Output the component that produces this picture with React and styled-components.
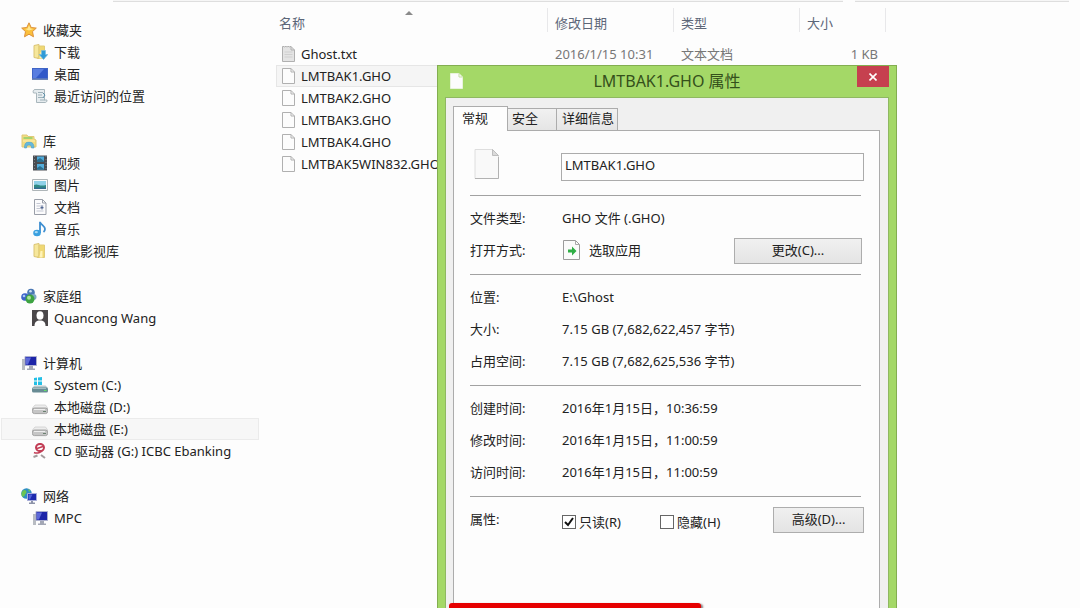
import { useState } from 'react';
import styled, { createGlobalStyle } from 'styled-components';

const GlobalStyle = createGlobalStyle`
    * {
        box-sizing: border-box;
    }

    body {
        margin: 0;
        background: #fdfdfd;
        color: #222;
        font-family: "Noto Sans", "Noto Sans CJK SC", sans-serif;
        font-size: 13px;
        line-height: 22px;
        overflow: hidden;
    }

    button, input {
        font: inherit;
        color: inherit;
    }
`;

// --- Explorer ---

const Desktop = styled.div`
    position: relative;
    min-height: 100vh;
    overflow: hidden;
`;

const AddressStrip = styled.div`
    display: flex;
    gap: 12px;
    height: 3px;
    padding: 0 11px 0 113px;
`;

const StripField = styled.div`
    flex: ${props => props.$grow};
    height: 2px;
    background: #f6f6f6;
    border-bottom: 1px solid #dedede;
`;

const Explorer = styled.div`
    display: flex;
`;

const Sidebar = styled.nav`
    width: 276px;
    flex-shrink: 0;
    display: flex;
    flex-direction: column;
    gap: 23px;
    padding: 16px 17px 0 1px;
`;

const Group = styled.div`
    display: flex;
    flex-direction: column;
`;

const NavLink = styled.a`
    display: flex;
    align-items: center;
    gap: 6px;
    height: 22px;
    padding-left: ${props => (props.$child ? '30px' : '19px')};
    border: 1px solid ${props => (props.$selected ? '#ebebeb' : 'transparent')};
    background: ${props => (props.$selected ? '#f7f7f7' : 'none')};
    color: #222;
    text-decoration: none;
    white-space: nowrap;

    svg {
        flex-shrink: 0;
    }
`;

const FileArea = styled.main`
    flex: 1;
    min-width: 0;
`;

const FileTable = styled.table`
    width: 610px;
    table-layout: fixed;
    border-collapse: collapse;
`;

const HeadCell = styled.th`
    position: relative;
    width: ${props => props.$width}px;
    height: 40px;
    padding: 0 0 0 ${props => props.$indent || 7}px;
    background: linear-gradient(#e8e8ea, #e8e8ea) right 5px / 1px 24px no-repeat;
    color: #5c6678;
    font-weight: normal;
    text-align: left;
`;

const SortArrow = styled.svg`
    position: absolute;
    top: 7px;
    left: 50%;
    margin-left: -7px;
`;

const FileRow = styled.tr`
    height: 22px;
    background: ${props => (props.$selected ? '#f5f5f5' : 'none')};
    box-shadow: ${props => (props.$selected ? 'inset 0 0 0 1px #e6e6e6' : 'none')};
`;

const FileCell = styled.td`
    padding: 0 8px 0 ${props => (props.$main ? 5 : 7)}px;
    color: ${props => (props.$main ? '#222' : '#777')};
    text-align: ${props => (props.$right ? 'right' : 'left')};
    white-space: nowrap;
`;

const FileName = styled.span`
    display: flex;
    align-items: center;
    gap: 4px;
    height: 22px;
`;

// --- Properties dialog ---

const Dialog = styled.section`
    position: absolute;
    top: 65px;
    bottom: -1px;
    left: 437px;
    width: 460px;
    display: flex;
    flex-direction: column;
    padding: 0 7px;
    border: 1px solid #83ae50;
    background: #a4d867;
`;

const TitleBar = styled.header`
    display: grid;
    grid-template-columns: 32px 1fr 32px;
    align-items: center;
    height: 31px;
    padding-bottom: 2px;
    flex-shrink: 0;

    svg {
        margin-left: 4px;
    }
`;

const Title = styled.h1`
    margin: 0;
    color: #35501b;
    font-size: 16px;
    font-weight: normal;
    line-height: 28px;
    text-align: center;
`;

const CloseButton = styled.button`
    align-self: start;
    display: flex;
    align-items: center;
    justify-content: center;
    width: 32px;
    height: 21px;
    padding: 0;
    border: 0;
    background: #c6404f;

    svg {
        margin: 0;
    }
`;

const Client = styled.div`
    flex: 1;
    display: flex;
    flex-direction: column;
    padding: 8px 8px 0 7px;
    border: 1px solid #8fb862;
    border-bottom: 0;
    background: #f0f0f0;
`;

const TabList = styled.div`
    display: flex;
    align-items: flex-end;
    height: 24px;
`;

const Tab = styled.button`
    height: ${props => (props.$active ? 25 : 22)}px;
    margin-bottom: ${props => (props.$active ? -1 : 0)}px;
    padding: 0 ${props => props.$tail}px 2px ${props => props.$lead}px;
    border: 1px solid #acacac;
    border-left-width: ${props => (props.$active ? 1 : 0)}px;
    border-bottom: 0;
    background: ${props => (props.$active ? '#fdfdfd' : 'linear-gradient(#f1f1f1, #e5e5e5)')};
    line-height: 19px;
    white-space: nowrap;
    z-index: ${props => (props.$active ? 1 : 0)};
`;

const Panel = styled.div`
    flex: 1;
    padding: 0 15px 0 16px;
    border: 1px solid #acacac;
    border-bottom: 0;
    background: #fdfdfd;
`;

const Section = styled.div`
    padding: 5px 0 9px;
    background: linear-gradient(#a2a2a2, #a2a2a2) left bottom / calc(100% - 3px) 1px no-repeat;
    margin-bottom: 1px;

    &:last-child {
        background: none;
    }
`;

const NameRow = styled.div`
    display: flex;
    align-items: center;
    height: 51px;
    padding: 5px 0 0 4px;
    gap: 61px;
`;

const NameInput = styled.input`
    flex: 1;
    min-width: 0;
    height: 28px;
    margin-top: 6px;
    padding: 0 3px 4px;
    border: 1px solid #ababab;
    background: #fdfdfd;
`;

const Field = styled.div`
    display: flex;
    align-items: center;
    height: 32px;
`;

const FieldLabel = styled.span`
    width: 92px;
    flex-shrink: 0;
`;

const FieldValue = styled.div`
    flex: 1;
    display: flex;
    align-items: center;
    gap: 8px;
    white-space: nowrap;
`;

const DialogButton = styled.button`
    width: ${props => props.$width}px;
    height: 26px;
    margin-top: 2px;
    margin-right: ${props => (props.$inset ? 2 : 0)}px;
    padding: 0 0 2px;
    border: 1px solid #adadad;
    background: linear-gradient(#f0f0f0, #e4e4e4);
    line-height: 20px;
`;

const CheckLabel = styled.label`
    display: flex;
    align-items: center;
    gap: 3px;
    width: 90px;
    padding-top: 6px;
`;

const CheckInput = styled.input`
    appearance: none;
    width: 14px;
    height: 14px;
    margin: 0;
    border: 1px solid #666;
    background: #fff;

    &:checked {
        background: #fff url("data:image/svg+xml,%3Csvg xmlns='http://www.w3.org/2000/svg' viewBox='0 0 12 12'%3E%3Cpath d='M2 6l3 3 5-7' fill='none' stroke='%23111' stroke-width='2'/%3E%3C/svg%3E") center / 12px 12px;
    }
`;

const RecordBar = styled.div`
    position: absolute;
    bottom: 0;
    left: 449px;
    width: 252px;
    height: 5px;
    border-radius: 3px 3px 0 0;
    background: #e60000;
    box-shadow: 2px 1px 2px rgba(60, 40, 40, 0.6);
`;

// --- Icons ---

const Svg = ({ children }) => (
    <svg width="16" height="16" viewBox="0 0 16 16" fill="none" aria-hidden="true">{children}</svg>
);

const StarIcon = () => (
    <Svg>
        <path d="M8 .8l2.2 4.7 5.1.6-3.8 3.5 1 5.2L8 12.2l-4.5 2.6 1-5.2L.7 6.1l5.1-.6z" fill="#fbc03c" stroke="#dc913b" strokeLinejoin="round" />
        <path d="M8 3.2l1.4 3.2 3.2.5L8 8.5 4 7l2.7-.6z" fill="#ffe892" />
    </Svg>
);

const FolderIcon = ({ download }) => (
    <Svg>
        <path d="M2 1.5l5-1v14l-5-1z" fill="#f6e79b" stroke="#dac475" />
        <path d="M7 2h5.5v12.5H5.5L7 12z" fill="#f0d873" stroke="#e0cb78" />
        <path d="M8.5 8h2v6.5h-3z" fill="#fff3b8" />
        {download && <path d="M9.5 6.5h4v4h2.3l-4.3 5-4.3-5h2.3z" fill="#2f9bd8" stroke="#77bce0" strokeWidth=".7" />}
    </Svg>
);

const DesktopIcon = () => (
    <Svg>
        <path d="M0 2h16v12H0z" fill="#4065c6" />
        <path d="M1 3h14v9H1z" fill="#3159c9" />
        <path d="M1 3h11L4 12H1z" fill="#587de0" />
        <path d="M0 12.5h16V14H0z" fill="#6d86b6" />
    </Svg>
);

const RecentIcon = () => (
    <Svg>
        <path d="M3 1.5h9.5V12H15c0 2-1 2.5-2 2.5H4.500V5H1.500C.5 3.500 1.500 1.500 3 1.500z" fill="#e6ecef" stroke="#a8b6bc" />
        <path d="M6 4.500h5M6 7h4M6 9.500h5M8 12h5" stroke="#9fb2ba" />
        <path d="M11 5l2 2-2 3" stroke="#5c8fa8" />
    </Svg>
);

const LibraryIcon = () => (
    <Svg>
        <path d="M1 2h5l1 1.500h6V6l2 1v7H1z" fill="#f2dc81" stroke="#e0c978" />
        <path d="M2.500 4h9v2h-9z" fill="#a5d36e" />
        <path d="M3.500 15c0-4 1-6 4.500-6s5 2 5 6h-2.500c0-2-.5-3-2.500-3s-2.500 1-2.500 3z" fill="#65b8dd" stroke="#4a9ec6" strokeWidth=".6" />
        <path d="M2 8h12" stroke="#fff0b0" />
    </Svg>
);

const VideoIcon = () => (
    <Svg>
        <path d="M1 .5h14v15H1z" fill="#4a4d52" />
        <path d="M5 1.500h7V7H5z" fill="#4da9d9" />
        <path d="M5 9h7v5.500H5z" fill="#55aedb" />
        <path d="M5 5l3-2 4 3v1H5zM5 13l3-2 4 3v.5H5z" fill="#2c708f" />
        <path d="M2.500 1v14M14 1v14" stroke="#7c848a" strokeDasharray="1 2" />
    </Svg>
);

const PictureIcon = () => (
    <Svg>
        <path d="M.5 2.500h15v11H.5z" fill="#fafafa" stroke="#aeb5b8" />
        <path d="M2 4h12v8H2z" fill="#8fd1e8" />
        <path d="M2 8c4-2 5 2 12 0v4H2z" fill="#2f8a84" />
        <path d="M2 10.500h12V12H2z" fill="#326c91" />
    </Svg>
);

const DocumentIcon = () => (
    <Svg>
        <path d="M2.500.5h8L14 4v11.500H2.500z" fill="#fbfbfc" stroke="#9a9fa9" />
        <path d="M10.500.5V4H14" stroke="#9a9fa9" />
        <path d="M4.500 4.500h4M4.500 7h7M4.500 9.500h7M4.500 12h7" stroke="#c3c7d3" />
        <path d="M10 6.500v4M8.500 8.500h3" stroke="#4f6590" />
    </Svg>
);

const MusicIcon = () => (
    <Svg>
        <path d="M8 12V.8c.5 3 5 4 5 7.200 0 1.500-.8 2.500-1.500 3" stroke="#3d8ed0" strokeWidth="1.800" />
        <ellipse cx="5" cy="12" rx="3.800" ry="3.200" fill="#3aa0e0" />
        <ellipse cx="4.300" cy="11.200" rx="1.600" ry="1.100" fill="#a6daf6" />
    </Svg>
);

const HomegroupIcon = () => (
    <Svg>
        <circle cx="4" cy="9" r="3.800" fill="#3c62c9" />
        <circle cx="10" cy="4.500" r="3.800" fill="#4a78b4" />
        <circle cx="12.500" cy="9" r="3" fill="#7fa8c4" />
        <circle cx="9" cy="11" r="4.500" fill="#3da341" />
        <circle cx="8" cy="9.800" r="2" fill="#a9e39b" />
        <circle cx="3" cy="8" r="1.300" fill="#a7c8f2" />
        <circle cx="9.500" cy="3.300" r="1.300" fill="#cbe0f3" />
    </Svg>
);

const UserIcon = () => (
    <Svg>
        <path d="M0 0h16v16H0z" fill="#4a4749" />
        <ellipse cx="8" cy="5.500" rx="3.500" ry="4.300" fill="#fff" />
        <path d="M2.500 16c0-4 2-5.500 5.500-5.500s5.500 1.500 5.500 5.500z" fill="#fff" />
    </Svg>
);

const ComputerIcon = () => (
    <Svg>
        <path d="M1 4h3v11H1z" fill="#b8bcc2" />
        <path d="M4 1.500h11.500v9H4z" fill="#1c24a8" stroke="#adb1cf" />
        <path d="M5 2.500h5L7 9.500H5z" fill="#5d69d9" />
        <path d="M8 11h4v2.500h2V15H6v-1.500h2z" fill="#a3a7b5" />
    </Svg>
);

const SystemDriveIcon = () => (
    <Svg>
        <path d="M2 1l3-.5v3H2zM6 .5L10 0v3.500H6zM2 4.500h3V8H2zM6 4.500h4V8H6z" fill="#22bfe6" />
        <path d="M2.500 8.500h11L16 11H0z" fill="#b9c7cb" />
        <rect y="10.500" width="16" height="5" rx="1.500" fill="#688b94" />
        <path d="M1 11.500h13" stroke="#a4bbc1" />
        <path d="M12 13.500h2.500" stroke="#5fe264" />
    </Svg>
);

const DriveIcon = () => (
    <Svg>
        <path d="M3 6h10.500L16 9.500H0z" fill="#ededed" stroke="#c4c4c4" strokeWidth=".6" />
        <rect x=".4" y="9" width="15.200" height="5.600" rx="2" fill="#c5c5c5" stroke="#969696" strokeWidth=".8" />
        <path d="M2 10.500h11" stroke="#eee" />
        <path d="M11 12.500h3" stroke="#6b8170" />
    </Svg>
);

const DiscIcon = () => (
    <Svg>
        <ellipse cx="8" cy="4.500" rx="4" ry="3.600" stroke="#c23d55" strokeWidth="2" />
        <path d="M5 5.500l6-2M2 9.500c3 1.500 7 0 9-2.500" stroke="#c23d55" strokeWidth="1.500" />
        <path d="M1.500 14l4-1.500M9 12l4 3" stroke="#a49a9c" strokeWidth="2" />
    </Svg>
);

const NetworkIcon = () => (
    <Svg>
        <circle cx="5.500" cy="5.500" r="5.300" fill="#2f8ec4" />
        <path d="M1.500 3c2-2 4-1 4 1s-2 2-2 4l-2 1C0 7 0 5 1.500 3zM7 1l2.500 1.500L8 4z" fill="#6cc552" />
        <path d="M6.500 5.500h9v7h-9z" fill="#1d2aae" stroke="#a6acd8" />
        <path d="M7.500 6.500h4l-2.500 5H7.500z" fill="#5262d8" />
        <path d="M10 13h2v1.500h2V16H8v-1.500h2z" fill="#8d93a8" />
    </Svg>
);

const PageIcon = ({ lined, white }) => (
    <Svg>
        <path d="M1.500.5h8.500l3.500 3.500v11.500h-12z" fill={lined ? '#e4e4e4' : '#fcfcfc'} stroke={white ? '#e8f3dc' : '#b0b0b0'} />
        <path d="M10 .5V4h3.500" stroke={white ? '#c3dda3' : '#b0b0b0'} />
        {lined && <path d="M3.500 0v2M6 0v2M8.500 0v2M3.500 6h8M3.500 8.500h8M3.500 11h8" stroke="#d0d0d0" />}
    </Svg>
);

const LargePageIcon = () => (
    <svg width="26" height="32" viewBox="0 0 26 32" fill="none" aria-hidden="true">
        <path d="M1 1.500h17.500l6 6v23H1z" fill="#f9f9f9" stroke="#dedede" />
        <path d="M18.500 1.500v6h6z" fill="#dadada" stroke="#bdbdbd" />
        <path d="M1 30.500h23.500V9" stroke="#b2b2b2" />
    </svg>
);

const PickAppIcon = () => (
    <svg width="19" height="20" viewBox="0 0 19 20" fill="none" aria-hidden="true">
        <path d="M1.500.5h12l4 4v15h-16z" fill="#fbfbfb" stroke="#9b9b9b" />
        <path d="M13.500.5v4h4" stroke="#aaa" />
        <path d="M6 9.500h4V6.500l4.500 4.500L10 15.500v-3H6z" fill="#2fae45" />
    </svg>
);

// --- Data ---

const groups = [
    {
        label: '收藏夹',
        Icon: StarIcon,
        items: [
            { label: '下载', Icon: () => <FolderIcon download /> },
            { label: '桌面', Icon: DesktopIcon },
            { label: '最近访问的位置', Icon: RecentIcon },
        ],
    },
    {
        label: '库',
        Icon: LibraryIcon,
        items: [
            { label: '视频', Icon: VideoIcon },
            { label: '图片', Icon: PictureIcon },
            { label: '文档', Icon: DocumentIcon },
            { label: '音乐', Icon: MusicIcon },
            { label: '优酷影视库', Icon: FolderIcon },
        ],
    },
    {
        label: '家庭组',
        Icon: HomegroupIcon,
        items: [{ label: 'Quancong Wang', Icon: UserIcon }],
    },
    {
        label: '计算机',
        Icon: ComputerIcon,
        items: [
            { label: 'System (C:)', Icon: SystemDriveIcon },
            { label: '本地磁盘 (D:)', Icon: DriveIcon },
            { label: '本地磁盘 (E:)', Icon: DriveIcon, selected: true },
            { label: 'CD 驱动器 (G:) ICBC Ebanking', Icon: DiscIcon },
        ],
    },
    {
        label: '网络',
        Icon: NetworkIcon,
        items: [{ label: 'MPC', Icon: ComputerIcon }],
    },
];

const files = [
    { name: 'Ghost.txt', date: '2016/1/15 10:31', type: '文本文档', size: '1 KB', lined: true },
    { name: 'LMTBAK1.GHO', selected: true },
    { name: 'LMTBAK2.GHO' },
    { name: 'LMTBAK3.GHO' },
    { name: 'LMTBAK4.GHO' },
    { name: 'LMTBAK5WIN832.GHO' },
];

const sizes = [
    ['位置:', 'E:\\Ghost'],
    ['大小:', '7.15 GB (7,682,622,457 字节)'],
    ['占用空间:', '7.15 GB (7,682,625,536 字节)'],
];

const times = [
    ['创建时间:', '2016年1月15日，10:36:59'],
    ['修改时间:', '2016年1月15日，11:00:59'],
    ['访问时间:', '2016年1月15日，11:00:59'],
];

const FieldList = ({ rows }) => (
    <Section>
        {rows.map(([label, value]) => (
            <Field key={label}>
                <FieldLabel>{label}</FieldLabel>
                <FieldValue>{value}</FieldValue>
            </Field>
        ))}
    </Section>
);

const PropertiesDialog = () => {
    const [name, setName] = useState('LMTBAK1.GHO');
    const [readOnly, setReadOnly] = useState(true);
    const [hidden, setHidden] = useState(false);

    return (
        <Dialog role="dialog" aria-labelledby="dialog-title">
            <TitleBar>
                <PageIcon white />
                <Title id="dialog-title">LMTBAK1.GHO 属性</Title>
                <CloseButton aria-label="关闭">
                    <svg width="8" height="8" viewBox="0 0 8 8">
                        <path d="M.5.5l7 7M7.500.5l-7 7" stroke="#fff" strokeWidth="1.600" />
                    </svg>
                </CloseButton>
            </TitleBar>
            <Client>
                <TabList role="tablist">
                    <Tab role="tab" aria-selected="true" $active $lead={8} $tail={19}>常规</Tab>
                    <Tab role="tab" aria-selected="false" $lead={4} $tail={18}>安全</Tab>
                    <Tab role="tab" aria-selected="false" $lead={5} $tail={3}>详细信息</Tab>
                </TabList>
                <Panel>
                    <Section>
                        <NameRow>
                            <LargePageIcon />
                            <NameInput aria-label="文件名" value={name} onChange={e => setName(e.target.value)} />
                        </NameRow>
                    </Section>
                    <Section>
                        <Field>
                            <FieldLabel>文件类型:</FieldLabel>
                            <FieldValue>GHO 文件 (.GHO)</FieldValue>
                        </Field>
                        <Field>
                            <FieldLabel>打开方式:</FieldLabel>
                            <FieldValue><PickAppIcon />选取应用</FieldValue>
                            <DialogButton $width={128} $inset>更改(C)...</DialogButton>
                        </Field>
                    </Section>
                    <FieldList rows={sizes} />
                    <FieldList rows={times} />
                    <Section>
                        <Field>
                            <FieldLabel>属性:</FieldLabel>
                            <FieldValue>
                                <CheckLabel>
                                    <CheckInput type="checkbox" checked={readOnly} onChange={() => setReadOnly(!readOnly)} />
                                    只读(R)
                                </CheckLabel>
                                <CheckLabel>
                                    <CheckInput type="checkbox" checked={hidden} onChange={() => setHidden(!hidden)} />
                                    隐藏(H)
                                </CheckLabel>
                            </FieldValue>
                            <DialogButton $width={91}>高级(D)...</DialogButton>
                        </Field>
                    </Section>
                </Panel>
            </Client>
        </Dialog>
    );
};

export default function App() {
    return (
        <Desktop>
            <GlobalStyle />
            <AddressStrip>
                <StripField $grow={730} />
                <StripField $grow={214} />
            </AddressStrip>
            <Explorer>
                <Sidebar>
                    {groups.map(({ label, Icon, items }) => (
                        <Group key={label}>
                            <NavLink href="#"><Icon />{label}</NavLink>
                            {items.map(item => (
                                <NavLink key={item.label} href="#" $child $selected={item.selected}>
                                    <item.Icon />{item.label}
                                </NavLink>
                            ))}
                        </Group>
                    ))}
                </Sidebar>
                <FileArea>
                    <FileTable>
                        <thead>
                            <tr>
                                <HeadCell $width={272} $indent={3}>
                                    名称
                                    <SortArrow width="8" height="5" viewBox="0 0 8 5">
                                        <path d="M0 5l4-4 4 4z" fill="#8a8a8a" />
                                    </SortArrow>
                                </HeadCell>
                                <HeadCell $width={126}>修改日期</HeadCell>
                                <HeadCell $width={126}>类型</HeadCell>
                                <HeadCell $width={86}>大小</HeadCell>
                            </tr>
                        </thead>
                        <tbody>
                            {files.map(file => (
                                <FileRow key={file.name} $selected={file.selected}>
                                    <FileCell $main>
                                        <FileName><PageIcon lined={file.lined} />{file.name}</FileName>
                                    </FileCell>
                                    <FileCell>{file.date}</FileCell>
                                    <FileCell>{file.type}</FileCell>
                                    <FileCell $right>{file.size}</FileCell>
                                </FileRow>
                            ))}
                        </tbody>
                    </FileTable>
                </FileArea>
            </Explorer>
            <PropertiesDialog />
            <RecordBar />
        </Desktop>
    );
}
